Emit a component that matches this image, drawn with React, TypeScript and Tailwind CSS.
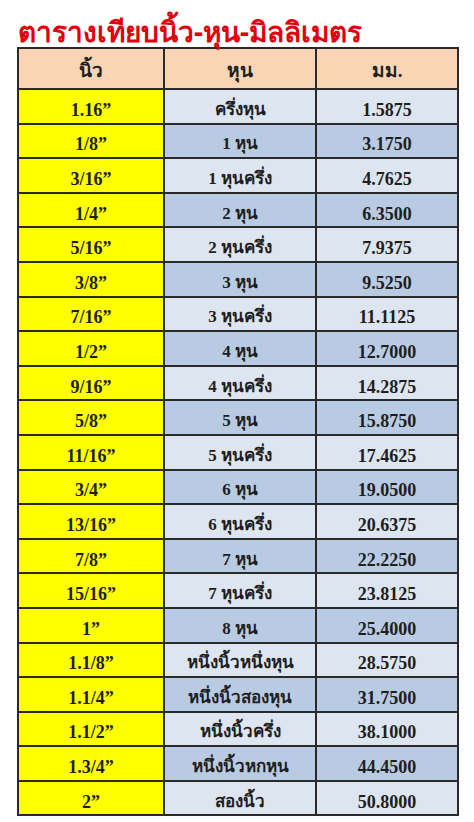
const rows: [string, string, string][] = [
  ['1.16”', 'ครึ่งหุน', '1.5875'],
  ['1/8”', '1 หุน', '3.1750'],
  ['3/16”', '1 หุนครึ่ง', '4.7625'],
  ['1/4”', '2 หุน', '6.3500'],
  ['5/16”', '2 หุนครึ่ง', '7.9375'],
  ['3/8”', '3 หุน', '9.5250'],
  ['7/16”', '3 หุนครึ่ง', '11.1125'],
  ['1/2”', '4 หุน', '12.7000'],
  ['9/16”', '4 หุนครึ่ง', '14.2875'],
  ['5/8”', '5 หุน', '15.8750'],
  ['11/16”', '5 หุนครึ่ง', '17.4625'],
  ['3/4”', '6 หุน', '19.0500'],
  ['13/16”', '6 หุนครึ่ง', '20.6375'],
  ['7/8”', '7 หุน', '22.2250'],
  ['15/16”', '7 หุนครึ่ง', '23.8125'],
  ['1”', '8 หุน', '25.4000'],
  ['1.1/8”', 'หนึ่งนิ้วหนึ่งหุน', '28.5750'],
  ['1.1/4”', 'หนึ่งนิ้วสองหุน', '31.7500'],
  ['1.1/2”', 'หนึ่งนิ้วครึ่ง', '38.1000'],
  ['1.3/4”', 'หนึ่งนิ้วหกหุน', '44.4500'],
  ['2”', 'สองนิ้ว', '50.8000'],
];

export default function App() {
  return (
    <div className="h-[822px] w-[474px] bg-white pl-[17px] pt-[14px] font-['Liberation_Serif',serif] text-[#1e1e1e]">
      {/* Title */}
      <h1 className="h-[33px] pl-[1px] pt-[2px] font-['Noto_Sans',sans-serif] text-[28px] font-bold leading-[31px] text-[#e0000b]">
        ตารางเทียบนิ้ว-หุน-มิลลิเมตร
      </h1>

      {/* Table */}
      <div className="w-[442px] border-2 border-[#2a2a2a] text-[18px] font-bold leading-[20px]">
        <div className="grid h-[39px] grid-cols-[146px_152px_1fr] bg-[#f9d5b6] text-[19px] leading-[24px]">
          <div className="flex items-center justify-center border-r-2 border-[#2a2a2a] pt-[4px]">นิ้ว</div>
          <div className="flex items-center justify-center border-r-2 border-[#2a2a2a] pt-[4px]">หุน</div>
          <div className="flex items-center justify-center pt-[4px]">มม.</div>
        </div>
        {rows.map(([inch, hun, mm], i) => (
          <div
            key={inch}
            className={`grid h-[34.6px] grid-cols-[146px_152px_1fr] border-t-2 border-[#2a2a2a] ${
              i % 2 === 0 ? 'bg-[#dce5f0]' : 'bg-[#b8cbe3]'
            }`}
          >
            <div className="flex items-center justify-center border-r-2 border-[#2a2a2a] bg-[#ffff00] pt-[7px]">{inch}</div>
            <div className="flex items-center justify-center border-r-2 border-[#2a2a2a] pt-[7px] text-[17px]">{hun}</div>
            <div className="flex items-center justify-center pt-[7px]">{mm}</div>
          </div>
        ))}
      </div>
    </div>
  );
}
